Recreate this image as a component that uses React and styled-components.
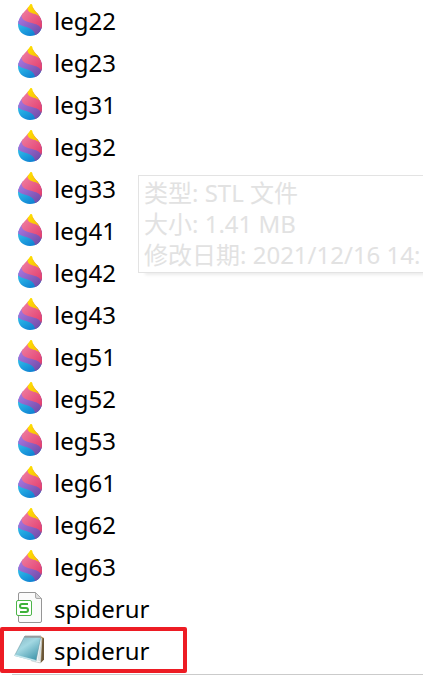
import React from "react";
import styled, { createGlobalStyle } from "styled-components";

const GlobalStyle = createGlobalStyle`
  * { box-sizing: border-box; }
  body {
    margin: 0;
    background: #fff;
    color: #000;
    font-family: "Noto Sans", "Noto Sans CJK SC", sans-serif;
    font-size: 24px;
    overflow: hidden;
  }
`;

const Page = styled.main`
  position: relative;
  overflow: hidden;
  padding-bottom: 1px;
`;

const FileList = styled.ul`
  margin: 0;
  padding: 0;
  list-style: none;
`;

const FileRow = styled.li`
  position: relative;
  display: flex;
  align-items: center;
  gap: 8px;
  height: 42px;
  padding-left: 14px;
`;

const IconSlot = styled.span`
  display: flex;
  flex: none;
  width: 32px;
  height: 36px;
`;

const FileName = styled.span`
  line-height: 32px;
  white-space: nowrap;
`;

const Marker = styled.span`
  position: absolute;
  left: 0;
  top: -3px;
  width: 187px;
  height: 46px;
  border: 4px solid #ed1c24;
  border-radius: 2px;
`;

const BottomRule = styled.hr`
  height: 1px;
  margin: 2px 0 0 12px;
  border: 0;
  background: #cbcbcb;
`;

const Tooltip = styled.div`
  position: absolute;
  left: 138px;
  right: -8px;
  top: 175px;
  padding: 1px 5px 2px;
  border: 1px solid #e3e3e3;
  background: #fff;
  box-shadow: 6px 3px 3px -1px #ececec;
  color: #e2e2e2;
  line-height: 31px;
  white-space: nowrap;
`;

const TooltipLine = styled.div`
  height: 31px;
`;

function PaintIcon({ id }) {
  const clip = `drop-${id}`;
  const blue = `blue-${id}`;
  const violet = `violet-${id}`;
  const pink = `pink-${id}`;
  const yellow = `yellow-${id}`;
  return (
    <svg width="32" height="36" viewBox="0 0 32 36" aria-hidden="true">
      <defs>
        <clipPath id={clip}>
          <path d="M16.500 1Q18 .5 18.300 2C18.700 5.500 20.500 7 23.500 10.500C26.500 14 28 17.500 28 21.500C28 28.500 23 33 16 33S4 28 4 21.500C4 17.500 6 14 8.500 10.800C11 7.500 14 5 16.500 1Z" />
        </clipPath>
        <linearGradient id={blue} x1="0" y1="0" x2="1" y2="1">
          <stop offset="0" stopColor="#35c9ee" />
          <stop offset="0.9" stopColor="#0873cd" />
        </linearGradient>
        <linearGradient id={violet} x1="0" y1="0" x2="1" y2="1">
          <stop offset="0.1" stopColor="#aa78e2" />
          <stop offset="1" stopColor="#66439d" />
        </linearGradient>
        <linearGradient id={pink} x1="0" y1="0" x2="1" y2="1">
          <stop offset="0" stopColor="#ef83a5" />
          <stop offset="1" stopColor="#e23869" />
        </linearGradient>
        <linearGradient id={yellow} x1="0" y1="0" x2="1" y2="1">
          <stop offset="0" stopColor="#ffe400" />
          <stop offset="1" stopColor="#f6b70b" />
        </linearGradient>
      </defs>
      <g clipPath={`url(#${clip})`}>
        <path fill={`url(#${blue})`} d="M2 18h28v16H2Z" />
        <path fill={`url(#${violet})`} d="M2 10h28v20l-9 4c.500-4-1.500-7-6-9C11 23 7.500 23.300 3.500 20Z" />
        <path fill={`url(#${pink})`} d="M8 4h22v22h-3c-.500-3-3.500-4.500-7.500-5.500C13 18.800 7.500 17.500 7.500 12Z" />
        <path fill={`url(#${yellow})`} d="M15 0h5l6.500 15c-1-2-3-3.300-5.500-4-3.500-1-7.500-1.500-7.500-6.500Z" />
      </g>
    </svg>
  );
}

function SheetIcon() {
  return (
    <svg width="32" height="36" viewBox="0 0 32 36" aria-hidden="true">
      <path d="M6 1.500h15.500l6 6V30a1.500 1.500 0 0 1-1.500 1.500H6A1.500 1.500 0 0 1 4.500 30V3A1.500 1.500 0 0 1 6 1.500Z" fill="#fbfbfb" stroke="#969696" />
      <path d="M21.500 1.500v4.500a1.500 1.500 0 0 0 1.500 1.500h4.500Z" fill="#dedede" stroke="#aaa" />
      <rect x="2.500" y="9.500" width="15" height="15" rx="1.500" fill="#fff" stroke="#4cb548" />
      <path d="M14 13H8Q6 13 6 15T8 17h4Q14 17 14 19T12 21H6" fill="none" stroke="#3db239" strokeWidth="2" />
    </svg>
  );
}

function NotepadIcon() {
  return (
    <svg width="32" height="36" viewBox="0 0 32 36" aria-hidden="true">
      <defs>
        <linearGradient id="note-cover" x1="0" y1="0" x2="0.7" y2="1">
          <stop offset="0" stopColor="#82b3c1" />
          <stop offset="0.45" stopColor="#a3d8e2" />
          <stop offset="1" stopColor="#4599ae" />
        </linearGradient>
      </defs>
      <path d="m26.500 3 3.500 2v21.500L26.500 30l-6-2Z" fill="#b59a66" />
      <path d="m28.500 5 1.500.500v21L27 29.500Z" fill="#6b5738" />
      <path d="m26 4 1.700 1.500-1.200 24.500-9-2Z" fill="#f8fafa" stroke="#aeb9bc" strokeWidth=".5" />
      <path d="m26.300 14-2.300 14m3-18-1.500 18" fill="none" stroke="#c5ced1" strokeWidth=".6" />
      <path d="M10.500 3.500 26.700 4.500 22 28 .700 22.500Z" fill="url(#note-cover)" stroke="#628f9b" strokeWidth=".5" />
      <path d="m.500 23 21 5.500.500-1.500L1 21.500Z" fill="#c5e7ed" />
      <path d="M10.500 3h16v1.500H10.500Z" fill="#8e9799" />
      <path d="M12 2v3m2-3v3m2-3v3m2-3v3m2-3v3m2-3v3m2-3v3m2-3v3" stroke="#a0a6a7" strokeWidth=".8" />
    </svg>
  );
}

const files = [
  ...["22", "23", "31", "32", "33", "41", "42", "43", "51", "52", "53", "61", "62", "63"].map(
    (number) => ({ id: number, name: `leg${number}`, kind: "paint" })
  ),
  { id: "sheet", name: "spiderur", kind: "sheet" },
  { id: "note", name: "spiderur", kind: "note", marked: true },
];

const icons = { paint: PaintIcon, sheet: SheetIcon, note: NotepadIcon };

export default function App() {
  return (
    <Page>
      <GlobalStyle />
      <FileList>
        {files.map((file) => {
          const Icon = icons[file.kind];
          return (
            <FileRow key={file.id}>
              <IconSlot><Icon id={file.id} /></IconSlot>
              <FileName>{file.name}</FileName>
              {file.marked && <Marker />}
            </FileRow>
          );
        })}
      </FileList>
      <BottomRule />
      <Tooltip role="tooltip" lang="zh-CN">
        <TooltipLine>类型: STL 文件</TooltipLine>
        <TooltipLine>大小: 1.41 MB</TooltipLine>
        <TooltipLine>修改日期: 2021/12/16 14:</TooltipLine>
      </Tooltip>
    </Page>
  );
}
